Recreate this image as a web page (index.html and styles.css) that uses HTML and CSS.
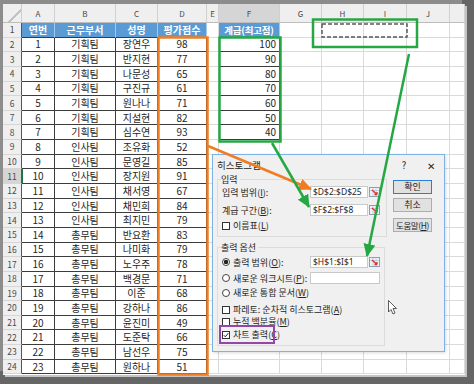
FILE: index.html
```html
<!DOCTYPE html>
<html>
<head>
    <meta charset="utf-8">
    <title>히스토그램</title>
    <link rel="stylesheet" href="styles.css">
</head>
<body>
    <div class="screen">
        <table class="sheet">
            <colgroup>
                <col style="width:19px"><col style="width:33px"><col style="width:61px"><col style="width:42px"><col style="width:49px"><col style="width:12px"><col style="width:61px"><col style="width:42px"><col style="width:42px"><col style="width:43px"><col style="width:43px"><col style="width:15px">
            </colgroup>
            <tr class="cols"><th class="corner"></th><th>A</th><th>B</th><th>C</th><th>D</th><th>E</th><th class="sel">F</th><th>G</th><th>H</th><th>I</th><th>J</th><th></th></tr>
            <tr class="top"><th>1</th><td class="hd">연번</td><td class="hd">근무부서</td><td class="hd">성명</td><td class="hd">평가점수</td><td></td><td class="hd bin-hd">계급(최고점)</td><td></td><td></td><td></td><td></td><td></td></tr>
            <tr class="data"><th>2</th><td>1</td><td>기획팀</td><td>장연우</td><td>98</td><td></td><td class="bin">100</td><td></td><td></td><td></td><td></td><td></td></tr>
            <tr class="data"><th>3</th><td>2</td><td>기획팀</td><td>반지현</td><td>77</td><td></td><td class="bin">90</td><td></td><td></td><td></td><td></td><td></td></tr>
            <tr class="data"><th>4</th><td>3</td><td>기획팀</td><td>나문성</td><td>65</td><td></td><td class="bin">80</td><td></td><td></td><td></td><td></td><td></td></tr>
            <tr class="data"><th>5</th><td>4</td><td>기획팀</td><td>구진규</td><td>61</td><td></td><td class="bin">70</td><td></td><td></td><td></td><td></td><td></td></tr>
            <tr class="data"><th>6</th><td>5</td><td>기획팀</td><td>원나나</td><td>71</td><td></td><td class="bin">60</td><td></td><td></td><td></td><td></td><td></td></tr>
            <tr class="data"><th>7</th><td>6</td><td>기획팀</td><td>지설현</td><td>82</td><td></td><td class="bin">50</td><td></td><td></td><td></td><td></td><td></td></tr>
            <tr class="data"><th>8</th><td>7</td><td>기획팀</td><td>심수연</td><td>93</td><td></td><td class="bin">40</td><td></td><td></td><td></td><td></td><td></td></tr>
            <tr class="data"><th>9</th><td>8</td><td>인사팀</td><td>조유화</td><td>52</td><td></td><td></td><td></td><td></td><td></td><td></td><td></td></tr>
            <tr class="data"><th>10</th><td>9</td><td>인사팀</td><td>문영길</td><td>85</td><td></td><td></td><td></td><td></td><td></td><td></td><td></td></tr>
            <tr class="data"><th class="sel">11</th><td class="active">10</td><td>인사팀</td><td>장지원</td><td>91</td><td></td><td></td><td></td><td></td><td></td><td></td><td></td></tr>
            <tr class="data"><th>12</th><td>11</td><td>인사팀</td><td>채서영</td><td>67</td><td></td><td></td><td></td><td></td><td></td><td></td><td></td></tr>
            <tr class="data"><th>13</th><td>12</td><td>인사팀</td><td>채민희</td><td>84</td><td></td><td></td><td></td><td></td><td></td><td></td><td></td></tr>
            <tr class="data"><th>14</th><td>13</td><td>인사팀</td><td>최지민</td><td>79</td><td></td><td></td><td></td><td></td><td></td><td></td><td></td></tr>
            <tr class="data"><th>15</th><td>14</td><td>총무팀</td><td>반요환</td><td>83</td><td></td><td></td><td></td><td></td><td></td><td></td><td></td></tr>
            <tr class="data"><th>16</th><td>15</td><td>총무팀</td><td>나미화</td><td>79</td><td></td><td></td><td></td><td></td><td></td><td></td><td></td></tr>
            <tr class="data"><th>17</th><td>16</td><td>총무팀</td><td>노우주</td><td>78</td><td></td><td></td><td></td><td></td><td></td><td></td><td></td></tr>
            <tr class="data"><th>18</th><td>17</td><td>총무팀</td><td>백경문</td><td>71</td><td></td><td></td><td></td><td></td><td></td><td></td><td></td></tr>
            <tr class="data"><th>19</th><td>18</td><td>총무팀</td><td>이준</td><td>68</td><td></td><td></td><td></td><td></td><td></td><td></td><td></td></tr>
            <tr class="data"><th>20</th><td>19</td><td>총무팀</td><td>강하나</td><td>86</td><td></td><td></td><td></td><td></td><td></td><td></td><td></td></tr>
            <tr class="data"><th>21</th><td>20</td><td>총무팀</td><td>윤진미</td><td>49</td><td></td><td></td><td></td><td></td><td></td><td></td><td></td></tr>
            <tr class="data"><th>22</th><td>21</td><td>총무팀</td><td>도준탁</td><td>66</td><td></td><td></td><td></td><td></td><td></td><td></td><td></td></tr>
            <tr class="data"><th>23</th><td>22</td><td>총무팀</td><td>남선우</td><td>75</td><td></td><td></td><td></td><td></td><td></td><td></td><td></td></tr>
            <tr class="data"><th>24</th><td>23</td><td>총무팀</td><td>원하나</td><td>51</td><td></td><td></td><td></td><td></td><td></td><td></td><td></td></tr>
        </table>
    </div>

    <!-- Histogram dialog -->
    <div class="dialog">
        <div class="dlg-title">
            <span class="name">히스토그램</span>
            <span class="help">?</span>
            <span class="close">✕</span>
        </div>
        <div class="dlg-body">
            <div class="dlg-main">
                <fieldset class="group">
                    <legend>입력</legend>
                    <div class="field">
                        <label>입력 범위(<u>I</u>):</label>
                        <span class="ref">$D$2:$D$25</span>
                        <svg class="pick" viewBox="0 0 11 12"><rect x="0.5" y="1.5" width="10" height="9" fill="#eef3fa" stroke="#8c9fb8"/><path d="M1 4.5h9M4 2v8M7 2v8" stroke="#b9c7d8" stroke-width="0.8"/><path d="M3 4l5 4.5M8 8.5V6M8 8.5H5.5" stroke="#d6322e" stroke-width="1.3" fill="none"/></svg>
                    </div>
                    <div class="field">
                        <label>계급 구간(<u>B</u>):</label>
                        <span class="ref">$F$2:$F$8</span>
                        <svg class="pick" viewBox="0 0 11 12"><rect x="0.5" y="1.5" width="10" height="9" fill="#eef3fa" stroke="#8c9fb8"/><path d="M1 4.5h9M4 2v8M7 2v8" stroke="#b9c7d8" stroke-width="0.8"/><path d="M3 4l5 4.5M8 8.5V6M8 8.5H5.5" stroke="#d6322e" stroke-width="1.3" fill="none"/></svg>
                    </div>
                    <div class="check first"><span class="box"></span>이름표(<u>L</u>)</div>
                </fieldset>
                <fieldset class="group out">
                    <legend>출력 옵션</legend>
                    <div class="field">
                        <label><span class="radio on"></span>출력 범위(<u>O</u>):</label>
                        <span class="ref">$H$1:$I$1</span>
                        <svg class="pick" viewBox="0 0 11 12"><rect x="0.5" y="1.5" width="10" height="9" fill="#eef3fa" stroke="#8c9fb8"/><path d="M1 4.5h9M4 2v8M7 2v8" stroke="#b9c7d8" stroke-width="0.8"/><path d="M3 4l5 4.5M8 8.5V6M8 8.5H5.5" stroke="#d6322e" stroke-width="1.3" fill="none"/></svg>
                    </div>
                    <div class="field second">
                        <label><span class="radio"></span>새로운 워크시트(<u>P</u>):</label>
                        <span class="ref wide"></span>
                    </div>
                    <div class="check"><span class="radio"></span>새로운 통합 문서(<u>W</u>)</div>
                    <div class="check gap"><span class="box"></span>파레토: 순차적 히스토그램(<u>A</u>)</div>
                    <div class="check tight"><span class="box"></span>누적 백분율(<u>M</u>)</div>
                    <div class="check"><svg class="box-on" viewBox="0 0 8 8"><rect x="0.5" y="0.5" width="7" height="7" fill="#fff" stroke="#333"/><path d="M1.8 4.2 L3.3 5.8 L6.3 2.2" stroke="#222" stroke-width="1" fill="none"/></svg>차트 출력(<u>C</u>)</div>
                </fieldset>
            </div>
            <div class="dlg-side">
                <button class="default">확인</button>
                <button>취소</button>
                <button class="help-btn">도움말(<u>H</u>)</button>
            </div>
        </div>
    </div>

    <!-- Callout boxes, arrows and pointer drawn over the sheet -->
    <svg class="marks" viewBox="0 0 474 384">
        <defs>
            <marker id="head-orange" markerWidth="13" markerHeight="12" refX="12" refY="6" orient="auto" markerUnits="userSpaceOnUse">
                <path d="M0,0 L13,6 L0,12 z" fill="#f07d22"/>
            </marker>
            <marker id="head-green" markerWidth="13" markerHeight="12" refX="12" refY="6" orient="auto" markerUnits="userSpaceOnUse">
                <path d="M0,0 L13,6 L0,12 z" fill="#25a844"/>
            </marker>
        </defs>
        <rect x="158.5" y="37.5" width="49" height="337" fill="none" stroke="#f07d22" stroke-width="2.5"/>
        <rect x="219.5" y="37.5" width="61" height="104" fill="none" stroke="#25a844" stroke-width="2.5"/>
        <rect x="313" y="19.5" width="104" height="27.5" fill="none" stroke="#25a844" stroke-width="2.5"/>
        <rect x="322" y="24" width="85" height="13" fill="none" stroke="#5a5a5a" stroke-width="1.5" stroke-dasharray="4 2"/>
        <rect x="220" y="326" width="54" height="17" fill="none" stroke="#9447a8" stroke-width="2"/>
        <line x1="208" y1="146" x2="311" y2="189" stroke="#f07d22" stroke-width="2.5" marker-end="url(#head-orange)"/>
        <line x1="272" y1="143" x2="309" y2="207" stroke="#25a844" stroke-width="2.5" marker-end="url(#head-green)"/>
        <line x1="409" y1="54" x2="367" y2="256" stroke="#25a844" stroke-width="2.5" marker-end="url(#head-green)"/>
        <path d="M388.5,300.5 V312 L391,309.5 L393,314 L395,313 L393,308.5 L396.5,308.5 Z" fill="#fff" stroke="#333" stroke-width="0.8"/>
    </svg>
</body>
</html>
```

FILE: styles.css
```css
/* Page frame around the screenshot */
body {
    margin: 0;
    width: 474px;
    height: 384px;
    overflow: hidden;
    position: relative;
    background-color: #666;
    font-family: "Noto Sans CJK KR", "Noto Sans", sans-serif;
}

.screen {
    margin: 4px 0 0 3px;
    width: 462px;
    height: 371px;
    overflow: hidden;
    background-color: #fff;
    box-shadow: -3px -4px 0 #8c8c8c, 2px 2px 0 #c4c4c4;
}

/* Worksheet grid */
.sheet {
    border-collapse: separate;
    border-spacing: 0;
    table-layout: fixed;
    width: 462px;
    font-size: 10px;
    color: #262626;
}
.sheet tr {
    height: 14.65px;
}
.sheet tr.cols {
    height: 19px;
}
.sheet td {
    padding: 0;
    line-height: 12px;
    text-align: center;
    white-space: nowrap;
    overflow: hidden;
    border-right: 1px solid #dadada;
    border-bottom: 1px solid #dadada;
}
.sheet th {
    padding: 0;
    font-weight: normal;
    font-size: 8.5px;
    line-height: 11px;
    color: #4a4a4a;
    background-color: #efefef;
    border-right: 1px solid #d0d0d0;
    border-bottom: 1px solid #d6d6d6;
}
.sheet .cols th {
    font-size: 8px;
    border-bottom: 1px solid #bdbdbd;
}
.sheet th.sel {
    background-color: #d5d5d5;
}
.sheet th.corner {
    background: linear-gradient(135deg, #efefef 62%, #c2c2c2 62%, #c2c2c2 72%, #efefef 72%);
}
.sheet tr.top th,
.sheet tr.data th {
    border-right-color: #555;
}

/* Header cells */
.sheet td.hd {
    background-color: #5b9bd5;
    color: #fff;
    font-weight: bold;
    border-right-color: #a8c8e8;
    border-bottom-color: #3c3c3c;
}
.sheet td.bin-hd {
    font-size: 9.5px;
    letter-spacing: -0.2px;
}

/* Bordered data range A2:D24 and F2:F8 */
.sheet tr.data td:nth-child(-n+5) {
    border-right-color: #3c3c3c;
    border-bottom-color: #3c3c3c;
}
.sheet td.bin {
    text-align: right;
    padding-right: 3px;
    border-right-color: #3c3c3c;
    border-bottom-color: #3c3c3c;
}
.sheet td.active {
    box-shadow: inset 1px 0 0 #217346;
}

/* Dialog */
.dialog {
    position: absolute;
    left: 212px;
    top: 154px;
    width: 233px;
    height: 198px;
    box-sizing: border-box;
    background-color: #f0f0f0;
    border: 1px solid #7eb1e4;
    font-size: 9px;
    color: #262626;
    box-shadow: 1px 1px 3px rgba(0,0,0,0.15);
}
.dlg-title {
    height: 20px;
    display: flex;
    align-items: center;
    padding-left: 4px;
    font-size: 9.5px;
}
.dlg-title .name {
    flex: 1;
}
.dlg-title .help {
    width: 12px;
    text-align: center;
    margin-right: 15px;
}
.dlg-title .close {
    width: 12px;
    text-align: center;
    margin-right: 7px;
    font-size: 10px;
}
.dlg-body {
    display: flex;
}
.dlg-main {
    width: 174px;
}

.group {
    margin: 0 0 0 4px;
    padding: 0 0 5px 4px;
    width: 170px;
    box-sizing: border-box;
    min-width: 0;
    border: 1px solid #dcdcdc;
}
.group.out {
    width: 168px;
    margin-top: 6px;
    padding-bottom: 5px;
}
.group legend {
    padding: 0 2px 0 0;
    margin-left: -1px;
    line-height: 9px;
    font-size: 9px;
}

.field {
    display: flex;
    align-items: center;
    height: 14px;
    margin-top: 1px;
}
.field + .field {
    margin-top: 4px;
}
.group.out .field {
    margin-top: 3px;
}
.group.out .field.second {
    margin-top: 2px;
}
.field label {
    width: 88px;
    display: flex;
    align-items: center;
    white-space: nowrap;
}
.ref {
    width: 58px;
    height: 12px;
    box-sizing: border-box;
    background-color: #fff;
    border: 1px solid #c9c9c9;
    padding-left: 2px;
    font-size: 8.5px;
    line-height: 10px;
    font-family: "Noto Sans", sans-serif;
}
.ref.wide {
    width: 70px;
}
.pick {
    width: 11px;
    height: 12px;
    margin-left: 1px;
}

.check {
    display: flex;
    align-items: center;
    height: 11px;
    margin-top: 2px;
    white-space: nowrap;
}
.check.first {
    margin-top: 3px;
}
.check.gap {
    margin-top: 6px;
}
.check.tight {
    margin-top: 1px;
}
.box {
    width: 8px;
    height: 8px;
    box-sizing: border-box;
    border: 1px solid #333;
    background-color: #fff;
    margin-right: 3px;
}
.box-on {
    width: 8px;
    height: 8px;
    margin-right: 3px;
    flex-shrink: 0;
}
.radio {
    width: 8px;
    height: 8px;
    box-sizing: border-box;
    border: 1px solid #444;
    border-radius: 50%;
    background-color: #fff;
    margin-right: 3px;
    flex-shrink: 0;
}
.radio.on {
    background: radial-gradient(circle, #222 0 2px, #fff 2.4px);
}

.dlg-side {
    margin-left: 6px;
    padding-top: 5px;
    display: flex;
    flex-direction: column;
    gap: 4px;
}
.dlg-side button {
    width: 39px;
    height: 14px;
    padding: 0;
    font-family: inherit;
    font-size: 9px;
    line-height: 12px;
    white-space: nowrap;
    color: #262626;
    background-color: #e1e1e1;
    border: 1px solid #adadad;
}
.dlg-side button.default {
    border-color: #2a7fd4;
}
.dlg-side button.help-btn {
    margin-top: 2px;
    font-size: 8.5px;
    letter-spacing: -0.4px;
}

/* Overlay with callouts */
.marks {
    position: absolute;
    left: 0;
    top: 0;
    width: 474px;
    height: 384px;
    pointer-events: none;
}
```
